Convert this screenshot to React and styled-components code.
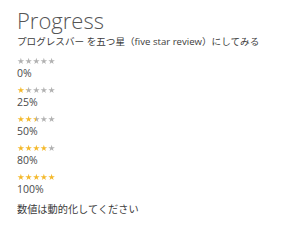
import React from "react";
import styled, { createGlobalStyle } from "styled-components";

const GlobalStyle = createGlobalStyle`
  body {
    margin: 0;
    background: #fff;
    font-family: "Open Sans", "Noto Sans CJK JP", sans-serif;
    color: #444;
  }
`;

const Page = styled.div`
  padding: 6px 17px 0;
`;

const Title = styled.h1`
  margin: 0;
  font-size: 22px;
  font-weight: 300;
  line-height: 28px;
  color: #555;
`;

const Lead = styled.p`
  margin: 0 0 6px;
  font-size: 9.6px;
  line-height: 16px;
  color: #3c3c3c;
`;

const Item = styled.div`
  display: flex;
  flex-direction: column;
  margin-bottom: 5px;
`;

// star row; the fill is a hard-stop gradient clipped to the glyphs
const Stars = styled.div`
  align-self: flex-start;
  font-family: "DejaVu Sans", sans-serif;
  font-size: 8.6px;
  line-height: 10px;
  color: transparent;
  -webkit-background-clip: text;
  background-clip: text;
`;

const Percent = styled.div`
  font-size: 10.5px;
  line-height: 14px;
  color: #4a4a4a;
`;

const Note = styled.p`
  margin: 4px 0 0;
  font-size: 10.2px;
  line-height: 16px;
  color: #3c3c3c;
`;

const values = [0, 25, 50, 80, 100];

const Rating = ({ value }) => (
  <Item>
    <Stars
      style={{
        backgroundImage: `linear-gradient(90deg, #f4b829 ${value}%, #b0b0b0 ${value}%)`,
      }}
    >
      ★★★★★
    </Stars>
    <Percent>{value}%</Percent>
  </Item>
);

export default function App() {
  return (
    <>
      <GlobalStyle />
      <Page>
        <Title>Progress</Title>
        <Lead>プログレスバー を五つ星（five star review）にしてみる</Lead>
        {values.map((v) => (
          <Rating key={v} value={v} />
        ))}
        <Note>数値は動的化してください</Note>
      </Page>
    </>
  );
}
